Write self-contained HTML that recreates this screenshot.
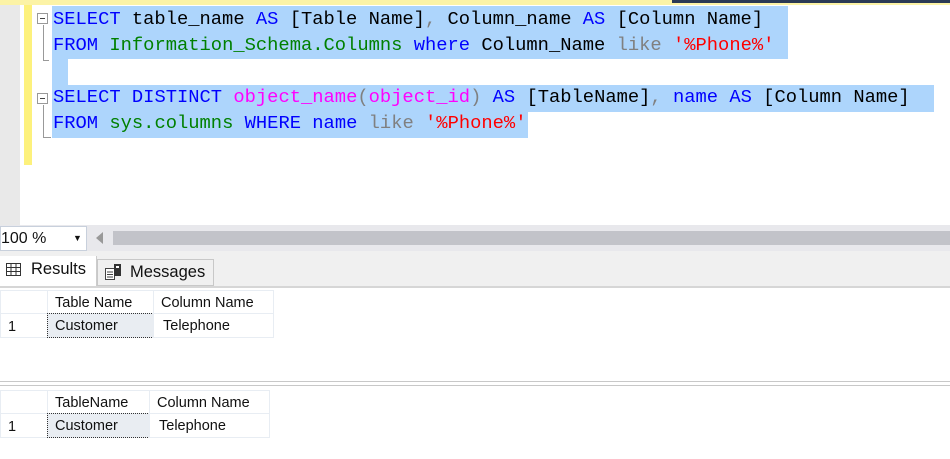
<!DOCTYPE html>
<html><head><style>
*{margin:0;padding:0;box-sizing:border-box}
body{width:950px;height:459px;overflow:hidden;background:#fff;position:relative;font-family:"Liberation Sans",sans-serif}
.abs{position:absolute}
.code{font-family:"Liberation Mono",monospace;font-size:18.8px;white-space:pre;line-height:26px;color:#000}
.sel{position:absolute;background:#add5fc;height:27px}
.k{color:#0000ff}.g{color:#008000}.m{color:#ff00ff}.gr{color:#808080}.r{color:#ff0000}
.fold{position:absolute;width:11px;height:11px;border:1px solid #999;background:#fff}
.fold:after{content:"";position:absolute;left:2px;top:4px;width:5px;height:1px;background:#444}
.cell{position:absolute;font-size:14.5px;color:#111;padding-left:7px;line-height:24px;border:1px solid #e8edf3}
</style></head><body>
<div class="abs" style="left:0;top:0;width:950px;height:5px;background:#fcf3a6"></div>
<div class="abs" style="left:672px;top:0;width:278px;height:3px;background:#2b3a55"></div>
<div class="abs" style="left:0;top:5px;width:20px;height:221px;background:#e9e9e9"></div>
<div class="abs" style="left:24px;top:5px;width:8px;height:160px;background:#fdf17c"></div>

<div class="sel" style="left:52px;top:6px;width:736px"></div>
<div class="sel" style="left:52px;top:32px;width:736px"></div>
<div class="sel" style="left:52px;top:58px;width:16px"></div>
<div class="sel" style="left:52px;top:85px;width:882px"></div>
<div class="sel" style="left:52px;top:111px;width:476px"></div>

<div class="fold" style="left:37px;top:13px"></div>
<div class="abs" style="left:43px;top:25px;width:1px;height:36px;background:#999"></div>
<div class="abs" style="left:43px;top:60px;width:6px;height:1px;background:#999"></div>
<div class="fold" style="left:37px;top:93px"></div>
<div class="abs" style="left:43px;top:105px;width:1px;height:33px;background:#999"></div>
<div class="abs" style="left:43px;top:137px;width:8px;height:1px;background:#999"></div>

<div class="abs code" style="left:53px;top:6px"><span class="k">SELECT</span> table_name <span class="k">AS</span> [Table Name]<span class="gr">,</span> Column_name <span class="k">AS</span> [Column Name]
<span class="k">FROM</span> <span class="g">Information_Schema.Columns</span> <span class="k">where</span> Column_Name <span class="gr">like</span> <span class="r">'%Phone%'</span>

<span class="k">SELECT</span> <span class="k">DISTINCT</span> <span class="m">object_name</span><span class="gr">(</span><span class="m">object_id</span><span class="gr">)</span> <span class="k">AS</span> [TableName]<span class="gr">,</span> <span class="k">name</span> <span class="k">AS</span> [Column Name]
<span class="k">FROM</span> <span class="g">sys.columns</span> <span class="k">WHERE</span> <span class="k">name</span> <span class="gr">like</span> <span class="r">'%Phone%'</span></div>

<div class="abs" style="left:0;top:225px;width:950px;height:26px;background:#e8e8ec"></div>
<div class="abs" style="left:0;top:226px;width:87px;height:25px;background:#fff;border:1px solid #c8d0dc;font-size:16px;line-height:23px;color:#111">100 %<span style="position:absolute;left:72px;top:0;font-size:9px">▼</span></div>
<div class="abs" style="left:96px;top:232px;width:0;height:0;border-top:6px solid transparent;border-bottom:6px solid transparent;border-right:7px solid #999"></div>
<div class="abs" style="left:113px;top:231px;width:837px;height:14px;background:#c2c3c9"></div>

<div class="abs" style="left:0;top:251px;width:950px;height:36px;background:#f0f0f0"></div>
<div class="abs" style="left:0;top:256px;width:97px;height:32px;background:#fff;border-right:1px solid #ccc"></div>
<svg class="abs" style="left:6px;top:263px" width="16" height="14"><rect x="0.5" y="0.5" width="14" height="12" fill="#fff" stroke="#333"/><path d="M0 4.5H15M0 8.5H15M5 0V13M10 0V13" stroke="#333"/></svg>
<div class="abs" style="left:31px;top:260px;font-size:16.5px;color:#111">Results</div>
<div class="abs" style="left:97px;top:259px;width:117px;height:27px;border:1px solid #c8c8c8;background:#f0f0f0"></div>
<svg class="abs" style="left:104px;top:263px" width="18" height="18"><rect x="1.5" y="5.5" width="9" height="11" fill="#fff" stroke="#444"/><path d="M3 9H9M3 11.5H9M3 14H9" stroke="#444"/><rect x="10" y="1" width="7" height="12" fill="#333"/><rect x="12" y="3" width="3" height="2" fill="#fff"/></svg>
<div class="abs" style="left:130px;top:263px;font-size:16.5px;color:#111">Messages</div>
<div class="abs" style="left:0;top:286px;width:950px;height:2px;background:#d6d6d6"></div>

<div class="cell" style="left:0;top:290px;width:48px;height:24px"></div>
<div class="cell" style="left:47px;top:290px;width:107px;height:24px">Table Name</div>
<div class="cell" style="left:153px;top:290px;width:121px;height:24px">Column Name</div>
<div class="cell" style="left:0;top:313px;width:48px;height:25px;line-height:26px">1</div>
<div class="cell" style="left:47px;top:313px;width:107px;height:25px;background:#e9edf2;border:1px dotted #333">Customer</div>
<div class="cell" style="left:153px;top:313px;width:121px;height:25px;padding-left:9px">Telephone</div>

<div class="abs" style="left:0;top:381px;width:950px;height:1px;background:#c8c8c8"></div>
<div class="abs" style="left:0;top:385px;width:950px;height:1px;background:#c8c8c8"></div>

<div class="cell" style="left:0;top:390px;width:48px;height:24px"></div>
<div class="cell" style="left:47px;top:390px;width:103px;height:24px">TableName</div>
<div class="cell" style="left:149px;top:390px;width:121px;height:24px">Column Name</div>
<div class="cell" style="left:0;top:413px;width:48px;height:25px;line-height:26px">1</div>
<div class="cell" style="left:47px;top:413px;width:103px;height:25px;background:#e9edf2;border:1px dotted #333">Customer</div>
<div class="cell" style="left:149px;top:413px;width:121px;height:25px;padding-left:9px">Telephone</div>
</body></html>
